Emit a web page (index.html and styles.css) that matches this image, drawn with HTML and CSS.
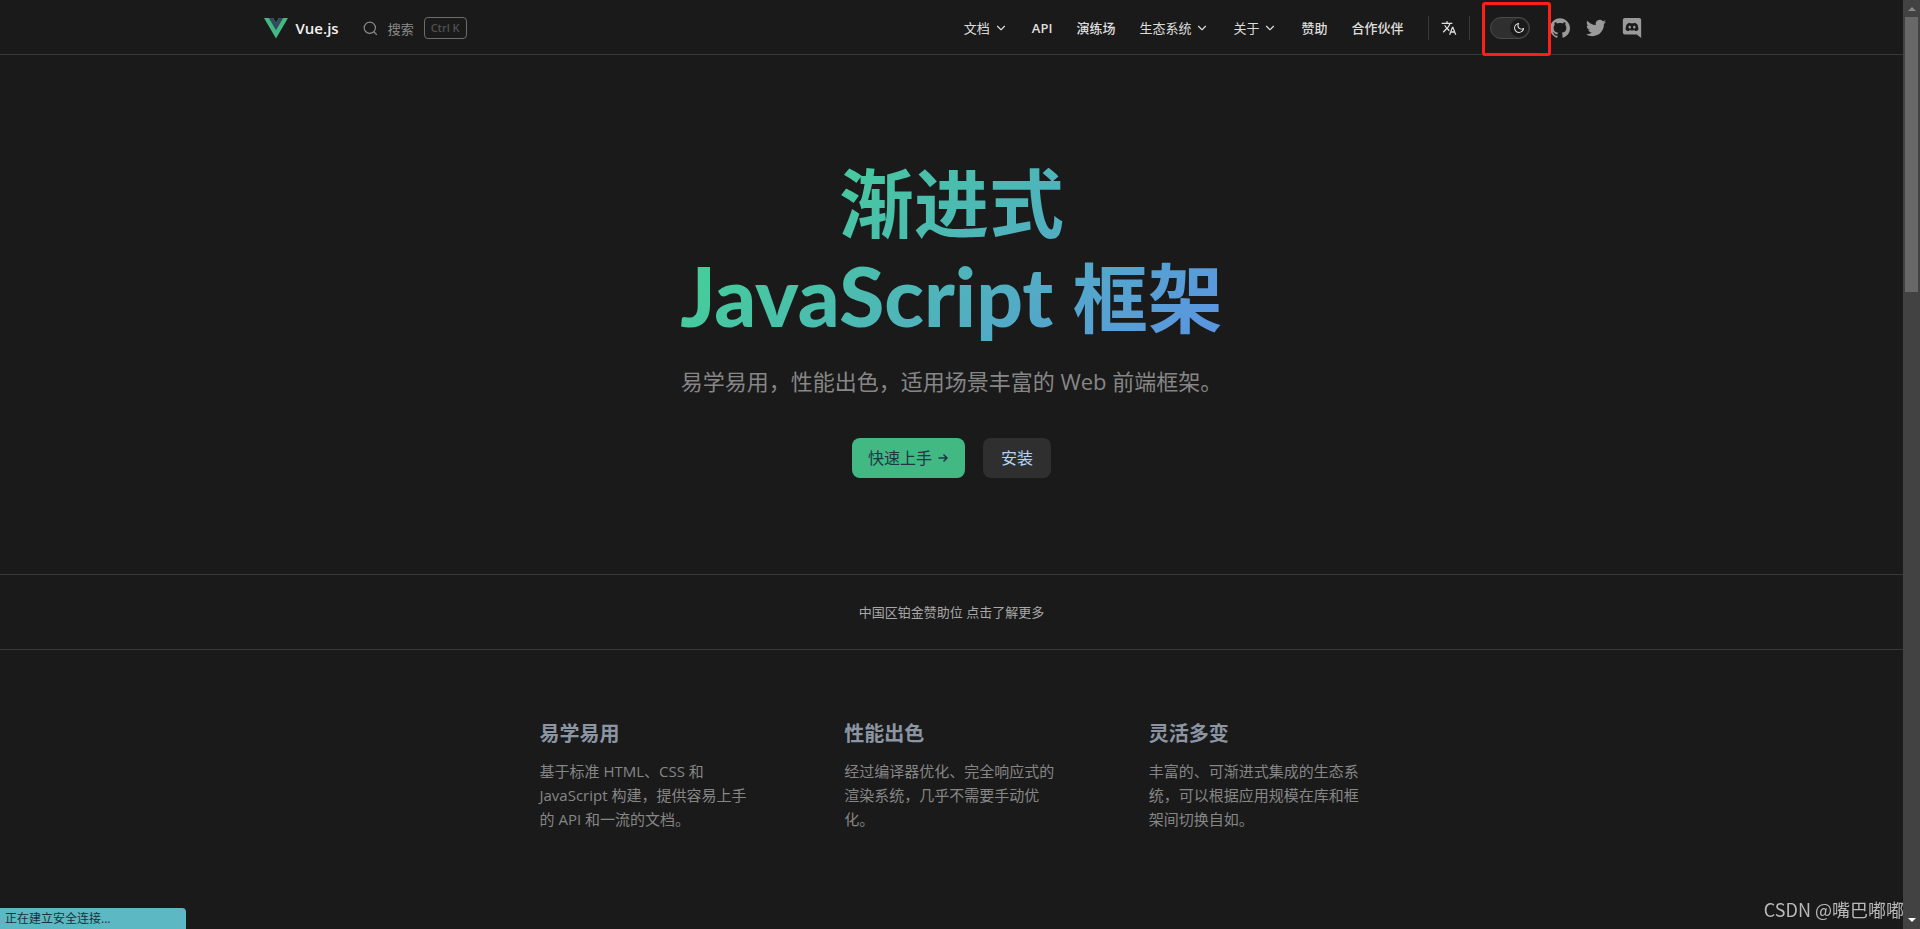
FILE: index.html
```html
<!DOCTYPE html>
<html lang="zh-CN">
<head>
    <meta charset="UTF-8">
    <meta name="viewport" content="width=device-width, initial-scale=1.0">
    <title>Vue.js - 渐进式 JavaScript 框架</title>
    <link rel="stylesheet" href="styles.css">
</head>
<body>
    <!-- Shared icons -->
    <svg class="sprite" aria-hidden="true">
        <symbol id="chevron" viewBox="0 0 24 24">
            <path d="M12,16c-0.3,0-0.5-0.1-0.7-0.3l-6-6c-0.4-0.4-0.4-1,0-1.4s1-0.4,1.4,0l5.3,5.3l5.3-5.3c0.4-0.4,1-0.4,1.4,0s0.4,1,0,1.4l-6,6C12.5,15.9,12.3,16,12,16z"/>
        </symbol>
    </svg>

    <header class="nav">
        <div class="nav-container">
            <a class="logo" href="#">
                <svg class="logo-icon" viewBox="0 0 128 128" aria-hidden="true">
                    <path fill="#42b883" d="M78.8,10L64,35.4L49.2,10H0l64,110l64-110C128,10,84.8,10,78.8,10z"/>
                    <path fill="#35495e" d="M78.8,10L64,35.4L49.2,10H25.6L64,76l38.4-66H78.8z"/>
                </svg>
                <span>Vue.js</span>
            </a>
            <button class="search" type="button">
                <svg class="search-icon" viewBox="0 0 20 20" aria-hidden="true">
                    <path d="M14.386 14.386l4.0877 4.0877-4.0877-4.0877c-2.9418 2.9419-7.7115 2.9419-10.6533 0-2.9419-2.9418-2.9419-7.7115 0-10.6533 2.9418-2.9419 7.7115-2.9419 10.6533 0 2.9419 2.9418 2.9419 7.7115 0 10.6533z"/>
                </svg>
                <span>搜索</span>
                <kbd>Ctrl K</kbd>
            </button>

            <nav class="menu">
                <button type="button">文档<svg class="chevron" aria-hidden="true"><use href="#chevron"/></svg></button>
                <a class="api" href="#">API</a>
                <a href="#">演练场</a>
                <button type="button">生态系统<svg class="chevron" aria-hidden="true"><use href="#chevron"/></svg></button>
                <button type="button">关于<svg class="chevron" aria-hidden="true"><use href="#chevron"/></svg></button>
                <a href="#">赞助</a>
                <a href="#">合作伙伴</a>
            </nav>

            <button class="translate" type="button" aria-label="语言">
                <svg viewBox="0 0 24 24" aria-hidden="true">
                    <path d="m12.87 15.07-2.54-2.51.03-.03c1.74-1.94 2.98-4.17 3.71-6.53H17V4h-7V2H8v2H1v2h11.17C11.5 7.92 10.44 9.75 9 11.35 8.07 10.32 7.3 9.19 6.69 8h-2c.73 1.63 1.73 3.17 2.98 4.56l-5.09 5.02L4 19l5-5 3.11 3.11.76-2.04M18.5 10h-2L12 22h2l1.12-3h4.75L21 22h2l-4.5-12m-2.62 7 1.62-4.33L19.12 17h-3.24"/>
                </svg>
            </button>

            <div class="appearance">
                <button class="switch" type="button" role="switch" aria-checked="true" aria-label="切换深色模式">
                    <span class="switch-check">
                        <svg viewBox="0 0 24 24" aria-hidden="true">
                            <path d="M12.1,22c-0.3,0-0.6,0-0.9,0c-5.5-0.5-9.5-5.4-9-10.9c0.4-4.8,4.2-8.6,9-9c0.4,0,0.8,0.2,1,0.5c0.2,0.3,0.2,0.8-0.1,1.1c-2,2.7-1.4,6.4,1.3,8.4c2.1,1.6,5,1.6,7.1,0c0.3-0.2,0.7-0.3,1.1-0.1c0.3,0.2,0.5,0.5,0.5,0.9c-0.2,2.7-1.5,5.1-3.6,6.8C16.6,21.2,14.4,22,12.1,22zM9.3,4.4c-2.9,1-5,3.6-5.2,6.8c-0.4,4.4,2.8,8.3,7.2,8.7c2.1,0.2,4.2-0.4,5.8-1.8c1.1-0.9,1.9-2.1,2.4-3.4c-2.5,0.9-5.3,0.5-7.5-1.1C9.2,11.4,8.1,7.7,9.3,4.4z"/>
                        </svg>
                    </span>
                </button>
            </div>

            <div class="social">
                <a href="#" aria-label="GitHub">
                    <svg viewBox="0 0 24 24" aria-hidden="true">
                        <path d="M12 .297c-6.63 0-12 5.373-12 12 0 5.303 3.438 9.8 8.205 11.385.6.113.82-.258.82-.577 0-.285-.01-1.04-.015-2.04-3.338.724-4.042-1.61-4.042-1.61C4.422 18.07 3.633 17.7 3.633 17.7c-1.087-.744.084-.729.084-.729 1.205.084 1.838 1.236 1.838 1.236 1.07 1.835 2.809 1.305 3.495.998.108-.776.417-1.305.76-1.605-2.665-.3-5.466-1.332-5.466-5.93 0-1.31.465-2.38 1.235-3.22-.135-.303-.54-1.523.105-3.176 0 0 1.005-.322 3.3 1.23.96-.267 1.98-.399 3-.405 1.02.006 2.04.138 3 .405 2.28-1.552 3.285-1.23 3.285-1.23.645 1.653.24 2.873.12 3.176.765.84 1.23 1.91 1.23 3.22 0 4.61-2.805 5.625-5.475 5.92.42.36.81 1.096.81 2.22 0 1.606-.015 2.896-.015 3.286 0 .315.21.69.825.57C20.565 22.092 24 17.592 24 12.297c0-6.627-5.373-12-12-12"/>
                    </svg>
                </a>
                <a href="#" aria-label="Twitter">
                    <svg viewBox="0 0 24 24" aria-hidden="true">
                        <path d="M23.953 4.57a10 10 0 01-2.825.775 4.958 4.958 0 002.163-2.723c-.951.555-2.005.959-3.127 1.184a4.92 4.92 0 00-8.384 4.482C7.69 8.095 4.067 6.13 1.64 3.162a4.822 4.822 0 00-.666 2.475c0 1.71.87 3.213 2.188 4.096a4.904 4.904 0 01-2.228-.616v.06a4.923 4.923 0 003.946 4.827 4.996 4.996 0 01-2.212.085 4.936 4.936 0 004.604 3.417 9.867 9.867 0 01-6.102 2.105c-.39 0-.779-.023-1.17-.067a13.995 13.995 0 007.557 2.209c9.053 0 13.998-7.496 13.998-13.985 0-.21 0-.42-.015-.63A9.935 9.935 0 0024 4.59z"/>
                    </svg>
                </a>
                <a href="#" aria-label="Discord">
                    <svg viewBox="0 0 24 24" aria-hidden="true">
                        <path fill-rule="evenodd" d="M3.4 0h17.2A2.4 2.4 0 0 1 23 2.4V24l-5.2-4.2H3.4A2.4 2.4 0 0 1 1 17.4V2.4A2.4 2.4 0 0 1 3.4 0zM9.6 5.6C8.1 5.7 6.9 6.3 5.9 7.1C4.7 9.3 4.3 11.6 4.4 14C5.4 15.2 6.7 15.7 8.3 15.7L9.1 14.6L7.4 13.8C10.4 15.3 13.6 15.3 16.6 13.8L14.9 14.6L15.7 15.7C17.3 15.7 18.6 15.2 19.6 14C19.7 11.6 19.3 9.3 18.1 7.1C17.1 6.3 15.9 5.7 14.4 5.6L14 6.5C12.7 6.3 11.3 6.3 10 6.5zM9.3 9.4a1.5 1.6 0 1 1 0 3.2a1.5 1.6 0 1 1 0-3.2zM14.7 9.4a1.5 1.6 0 1 1 0 3.2a1.5 1.6 0 1 1 0-3.2z"/>
                    </svg>
                </a>
            </div>
        </div>
    </header>

    <main>
        <section class="hero">
            <h1 class="tagline">渐进式<br><span class="latin">JavaScript </span>框架</h1>
            <p class="description">易学易用，性能出色，适用场景丰富的 Web 前端框架。</p>
            <div class="actions">
                <a class="get-started" href="#">快速上手
                    <svg viewBox="0 0 24 24" aria-hidden="true"><path d="M3 12h17M13 5l7 7-7 7"/></svg>
                </a>
                <a class="setup" href="#">安装</a>
            </div>
        </section>

        <section class="sponsor">
            <a href="#">中国区铂金赞助位 点击了解更多</a>
        </section>

        <section class="highlights">
            <div class="point">
                <h2>易学易用</h2>
                <p>基于标准 HTML、CSS 和 JavaScript 构建，提供容易上手的 API 和一流的文档。</p>
            </div>
            <div class="point">
                <h2>性能出色</h2>
                <p>经过编译器优化、完全响应式的渲染系统，几乎不需要手动优化。</p>
            </div>
            <div class="point">
                <h2>灵活多变</h2>
                <p>丰富的、可渐进式集成的生态系统，可以根据应用规模在库和框架间切换自如。</p>
            </div>
        </section>
    </main>

    <div class="scrollbar" aria-hidden="true">
        <span class="arrow-up"></span>
        <span class="thumb"></span>
        <span class="arrow-down"></span>
    </div>
    <div class="status">正在建立安全连接...</div>
    <div class="watermark">CSDN @嘴巴嘟嘟</div>
</body>
</html>
```

FILE: styles.css
```css
* {
    box-sizing: border-box;
}

body {
    margin: 0;
    padding-right: 17px; /* Room for the scrollbar */
    min-height: 100vh;
    overflow: hidden;
    background-color: #1a1a1a;
    color: rgba(255, 255, 255, 0.87);
    font-family: "Open Sans", "Noto Sans CJK SC", sans-serif;
    font-size: 16px;
}

h1, h2, p {
    margin: 0;
}

a {
    color: inherit;
    text-decoration: none;
}

button {
    padding: 0;
    border: none;
    background: none;
    color: inherit;
    font: inherit;
    cursor: pointer;
}

svg {
    display: block;
    fill: currentColor;
}

.sprite {
    display: none;
}

/* Nav */
.nav {
    height: 55px;
    border-bottom: 1px solid #383838;
}

.nav-container {
    display: flex;
    align-items: center;
    max-width: 1376px;
    height: 100%;
    margin: 0 auto;
    padding-top: 2px;
}

.logo {
    display: flex;
    align-items: center;
    gap: 8px;
    font-size: 15px;
    font-weight: 600;
    color: #f2f2f2;
}

.logo-icon {
    width: 24px;
    height: 24px;
}

.search {
    display: flex;
    align-items: center;
    gap: 10px;
    margin-left: 24px;
    font-size: 13px;
    color: #8a8a8a;
}

.search-icon {
    width: 15px;
    height: 15px;
    fill: none;
    stroke: currentColor;
    stroke-width: 1.6;
}

.search kbd {
    width: 43px;
    height: 22px;
    border: 1px solid #6c6c6c;
    border-radius: 4px;
    font-family: inherit;
    font-size: 11px;
    font-weight: 600;
    line-height: 20px;
    text-align: center;
    color: #505050;
}

.menu {
    display: flex;
    gap: 24px;
    margin-left: auto;
    font-size: 13px;
    line-height: 20px;
}

.menu a {
    font-weight: 500;
}

.menu .api {
    font-weight: 600;
}

.menu button {
    display: flex;
    align-items: center;
    gap: 4px;
}

.chevron {
    width: 14px;
    height: 14px;
}

.translate {
    margin-left: 24px;
    padding: 4px 12px;
    border-left: 1px solid #383838;
    border-right: 1px solid #383838;
}

.translate svg {
    width: 16px;
    height: 16px;
}

/* Dark mode switch with its highlight frame */
.appearance {
    position: relative;
    display: flex;
    margin-left: 20px;
}

.appearance::after {
    content: "";
    position: absolute;
    box-sizing: border-box;
    top: -15px;
    left: -8px;
    width: 69px;
    height: 54px;
    border: 3px solid #ff2015;
    border-radius: 3px;
    pointer-events: none;
}

.switch {
    display: flex;
    align-items: center;
    justify-content: flex-end;
    width: 40px;
    height: 22px;
    border: 1px solid #4a4a4a;
    border-radius: 11px;
    background-color: #2f2f2f;
}

.switch-check {
    display: flex;
    align-items: center;
    justify-content: center;
    width: 18px;
    height: 18px;
    margin-right: 1px;
    border-radius: 50%;
    background-color: #1a1a1a;
}

.switch-check svg {
    width: 12px;
    height: 12px;
}

.social {
    display: flex;
    gap: 16px;
    margin-left: 20px;
    margin-right: -2px;
    color: #9a9a9a;
}

.social svg {
    width: 20px;
    height: 20px;
}

/* Hero */
.hero {
    max-width: 960px;
    margin: 0 auto;
    padding: 101px 0 96px;
    text-align: center;
}

.tagline {
    font-size: 75px;
    font-weight: 700;
    line-height: 95px;
    background: linear-gradient(135deg, #42d392 25%, #647eff);
    -webkit-background-clip: text;
    background-clip: text;
    -webkit-text-fill-color: transparent;
}

.latin {
    font-family: Lato, sans-serif;
    font-size: 82px;
    font-weight: 900;
    line-height: 1;
}

.description {
    margin-top: 19px;
    font-size: 22px;
    line-height: 33px;
    color: #868686;
}

.actions {
    display: flex;
    justify-content: center;
    gap: 18px;
    margin-top: 40px;
    line-height: 40px;
}

.get-started {
    display: flex;
    align-items: center;
    gap: 5px;
    padding: 0 16px;
    border-radius: 8px;
    background-color: #42b883;
    color: #213547;
}

.get-started svg {
    width: 12px;
    height: 12px;
    fill: none;
    stroke: currentColor;
    stroke-width: 3;
}

.setup {
    padding: 0 18px;
    border-radius: 8px;
    background-color: #2f2f2f;
    color: #b4d2f7;
}

/* Sponsor band */
.sponsor {
    padding: 27px 0;
    border-top: 1px solid #383838;
    border-bottom: 1px solid #383838;
    font-size: 13px;
    line-height: 20px;
    text-align: center;
    color: #a8a8a8;
}

/* Highlights */
.highlights {
    display: grid;
    grid-template-columns: repeat(3, 1fr);
    gap: 90px;
    max-width: 824px;
    margin: 0 auto;
    padding: 69px 0;
}

.point h2 {
    font-size: 20px;
    font-weight: 600;
    line-height: 30px;
    color: #8b95a3;
}

.point p {
    margin-top: 10px;
    font-size: 15px;
    line-height: 24px;
    color: #868686;
}

/* Browser parts */
.scrollbar {
    position: fixed;
    top: 0;
    right: 0;
    bottom: 0;
    display: flex;
    flex-direction: column;
    align-items: center;
    width: 17px;
    padding: 7px 0;
    background-color: #424242;
}

.arrow-up,
.arrow-down {
    border-left: 4px solid transparent;
    border-right: 4px solid transparent;
}

.arrow-up {
    border-bottom: 4px solid #868686;
}

.arrow-down {
    margin-top: auto;
    border-top: 4px solid #fff;
}

.thumb {
    width: 13px;
    height: 30%;
    margin-top: 6px;
    background-color: #686868;
}

.status {
    position: fixed;
    left: 0;
    bottom: 0;
    width: 186px;
    height: 21px;
    padding-left: 5px;
    border-top-right-radius: 4px;
    background-color: #5cb8c2;
    color: #1d3038;
    font-size: 12px;
    line-height: 21px;
}

.watermark {
    position: fixed;
    right: 16px;
    bottom: 7px;
    font-family: "Noto Sans CJK SC", sans-serif;
    font-size: 18px;
    line-height: 26px;
    color: #b8b8b8;
}
```
